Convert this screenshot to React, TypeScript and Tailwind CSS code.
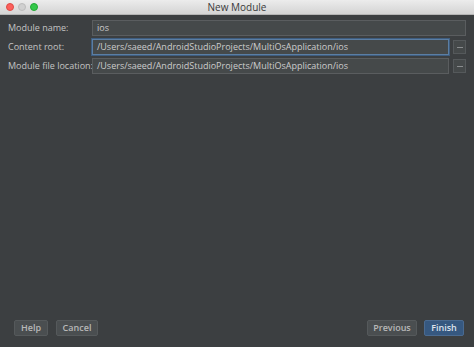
import React from "react";

const font = { fontFamily: '"Open Sans", "Liberation Sans", sans-serif' };

function Field({ value, focused, withButton }: { value: string; focused?: boolean; withButton?: boolean }) {
  return (
    <div className="flex items-center flex-1 gap-[4px]">
      <div
        className={
          "flex-1 h-[16px] flex items-center pl-[4px] text-[9px] text-[#cccccc] bg-[#45494a] border " +
          (focused ? "border-[#5b7ea3] shadow-[0_0_0_1px_#3e5d80]" : "border-[#5a5d5f]")
        }
      >
        {value}
      </div>
      {withButton && (
        <div className="w-[13px] h-[14px] border border-[#55595b] bg-[#45494a] flex items-center justify-center">
          <div className="w-[6px] h-[1px] bg-[#8a8d8f]" />
        </div>
      )}
    </div>
  );
}

function Btn({ label, primary, w }: { label: string; primary?: boolean; w: string }) {
  return (
    <div
      className={
        "h-[16px] flex items-center justify-center text-[9px] font-semibold rounded-[2px] border " +
        w +
        " " +
        (primary
          ? "bg-[#365880] border-[#4a6a90] text-[#dde2ea]"
          : "bg-[#4a4e50] border-[#55595b] text-[#b8b8b8]")
      }
    >
      {label}
    </div>
  );
}

export default function App() {
  return (
    <div className="w-[474px] h-[347px] bg-[#3c3f41] flex flex-col" style={font}>
      <div className="h-[15px] bg-gradient-to-b from-[#ececec] to-[#d4d4d4] border-b border-[#b5b5b5] relative flex items-center justify-center">
        <div className="absolute left-[6px] top-[3px] flex gap-[4px]">
          <div className="w-[8px] h-[8px] rounded-full bg-[#fc605c] border border-[#de4a44]" />
          <div className="w-[8px] h-[8px] rounded-full bg-[#d0d0d0] border border-[#bcbcbc]" />
          <div className="w-[8px] h-[8px] rounded-full bg-[#34c84a] border border-[#22a834]" />
        </div>
        <span className="text-[10px] text-[#3a3a3a] leading-none">New Module</span>
      </div>
      <div className="flex flex-col gap-[3px] pt-[5px] pl-[8px] pr-[8px]">
        <div className="flex items-center h-[16px]">
          <div className="w-[84px] text-[9px] text-[#c4c4c4] whitespace-nowrap">Module name:</div>
          <Field value="ios" />
        </div>
        <div className="flex items-center h-[16px]">
          <div className="w-[84px] text-[9px] text-[#c4c4c4] whitespace-nowrap">Content root:</div>
          <Field value="/Users/saeed/AndroidStudioProjects/MultiOsApplication/ios" focused withButton />
        </div>
        <div className="flex items-center h-[16px]">
          <div className="w-[84px] text-[9px] text-[#c4c4c4] whitespace-nowrap">Module file location:</div>
          <Field value="/Users/saeed/AndroidStudioProjects/MultiOsApplication/ios" withButton />
        </div>
      </div>
      <div className="flex-1" />
      <div className="flex items-center pl-[14px] pr-[10px] pb-[11px]">
        <Btn label="Help" w="w-[34px]" />
        <div className="w-[8px]" />
        <Btn label="Cancel" w="w-[42px]" />
        <div className="flex-1" />
        <Btn label="Previous" w="w-[50px]" />
        <div className="w-[7px]" />
        <Btn label="Finish" primary w="w-[40px]" />
      </div>
    </div>
  );
}
